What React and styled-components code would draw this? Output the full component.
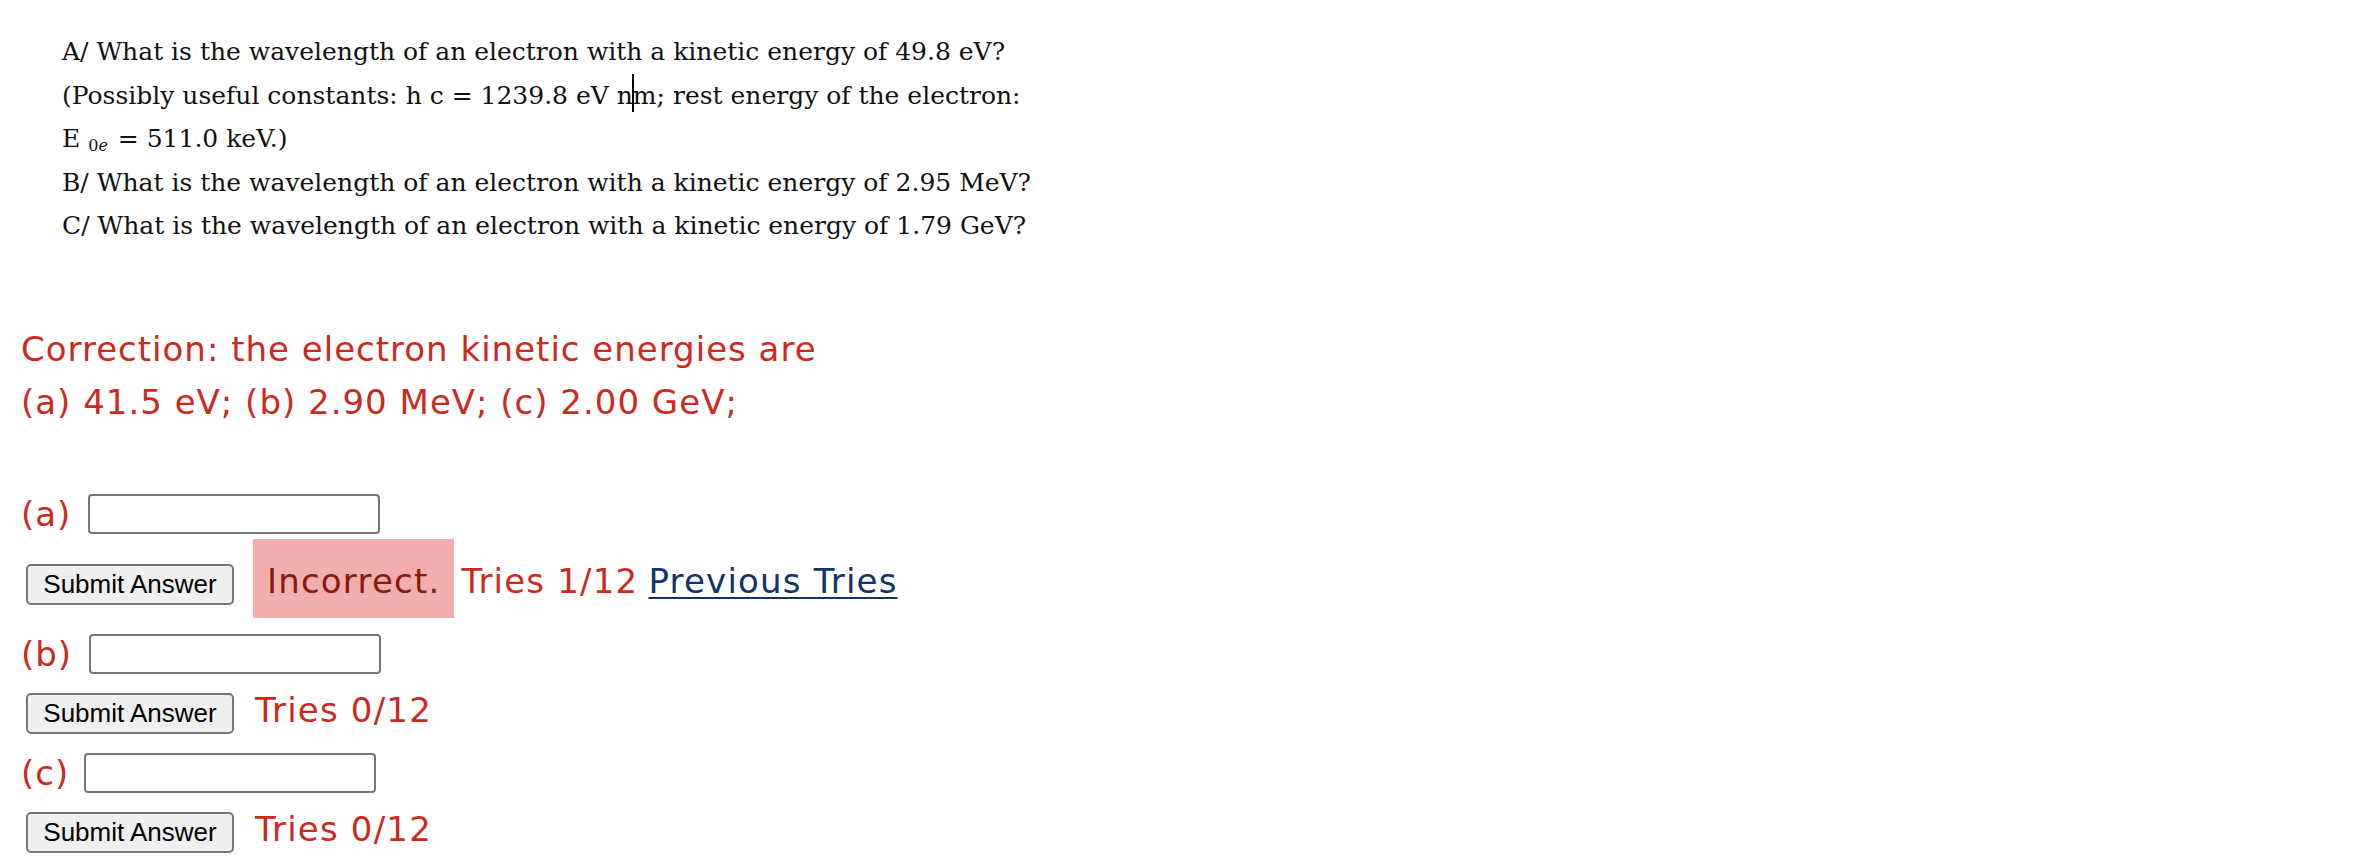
import styled, { createGlobalStyle } from 'styled-components';

const GlobalStyle = createGlobalStyle`
  body {
    margin: 0;
    background: #ffffff;
  }
`;

const Page = styled.div`
  padding: 30px 0 0 21px;
  display: flex;
  flex-direction: column;
  align-items: flex-start;
`;

const Question = styled.div`
  margin-left: 41px;
  font-family: "DejaVu Serif", "Liberation Serif", serif;
  font-size: 25px;
  line-height: 43.5px;
  color: #111;
`;

const Sub = styled.sub`
  font-size: 16px;
  vertical-align: -4px;
  line-height: 0;
  margin-right: 2px;
`;

const CursorAnchor = styled.span`
  position: relative;
  display: inline-block;
  width: 0;
`;

const Cursor = styled.span`
  position: absolute;
  left: -1px;
  top: -30px;
  width: 2px;
  height: 38px;
  background: #000;
`;

const Correction = styled.div`
  margin-top: 75px;
  font-family: "DejaVu Sans", Verdana, sans-serif;
  font-size: 34px;
  letter-spacing: 1px;
  line-height: 53px;
  color: #cc2a1e;
`;

const AnswerRow = styled.div`
  display: flex;
  align-items: center;
  margin-top: ${p => p.$top}px;
  height: 40px;
`;

const Label = styled.span`
  font-family: "DejaVu Sans", Verdana, sans-serif;
  font-size: 34px;
  letter-spacing: 1px;
  color: #cc2a1e;
  line-height: 40px;
`;

const AnswerInput = styled.input`
  box-sizing: border-box;
  width: 292px;
  height: 40px;
  margin-left: ${p => p.$gap}px;
  border: 2px solid #767676;
  border-radius: 4px;
  background: #fff;
  padding: 0 6px;
  font-size: 24px;
`;

const SubmitRow = styled.div`
  display: flex;
  align-items: baseline;
  margin-top: ${p => p.$top}px;
  font-family: "DejaVu Sans", Verdana, sans-serif;
  font-size: 34px;
  letter-spacing: 1.2px;
  line-height: normal;
`;

const SubmitButton = styled.button`
  box-sizing: border-box;
  width: 208px;
  height: 41px;
  margin-left: 5px;
  padding: 0;
  font-family: "Liberation Sans", Arial, sans-serif;
  font-size: 26px;
  letter-spacing: 0;
  color: #000;
  background: #efefef;
  border: 2px solid #767676;
  border-radius: 5px;
`;

const Incorrect = styled.span`
  display: inline-block;
  margin-left: 19px;
  padding: 22px 14px 17px 14px;
  background: #f2adad;
  color: #861a10;
`;

const Tries = styled.span`
  margin-left: ${p => p.$gap}px;
  color: #cc2a1e;
`;

const PrevLink = styled.a`
  margin-left: 10px;
  color: #13336b;
  text-decoration: underline;
  text-underline-offset: 4px;
  text-decoration-thickness: 2px;
`;

export default function App() {
  return (
    <Page>
      <GlobalStyle />
      <Question>
        <div>A/ What is the wavelength of an electron with a kinetic energy of 49.8 eV?</div>
        <div>
          (Possibly useful constants: h c = 1239.8 eV n
          <CursorAnchor><Cursor /></CursorAnchor>
          m; rest energy of the electron:
        </div>
        <div>E <Sub>0<i>e</i></Sub> = 511.0 keV.)</div>
        <div>B/ What is the wavelength of an electron with a kinetic energy of 2.95 MeV?</div>
        <div>C/ What is the wavelength of an electron with a kinetic energy of 1.79 GeV?</div>
      </Question>
      <Correction>
        <div>Correction: the electron kinetic energies are</div>
        <div>(a) 41.5 eV; (b) 2.90 MeV; (c) 2.00 GeV;</div>
      </Correction>

      <AnswerRow $top={65}>
        <Label>(a)</Label>
        <AnswerInput $gap={17} />
      </AnswerRow>
      <SubmitRow $top={5}>
        <SubmitButton>Submit Answer</SubmitButton>
        <Incorrect>Incorrect.</Incorrect>
        <Tries $gap={7}>Tries 1/12</Tries>
        <PrevLink href="#">Previous Tries</PrevLink>
      </SubmitRow>

      <AnswerRow $top={16}>
        <Label>(b)</Label>
        <AnswerInput $gap={17} />
      </AnswerRow>
      <SubmitRow $top={16}>
        <SubmitButton>Submit Answer</SubmitButton>
        <Tries $gap={21}>Tries 0/12</Tries>
      </SubmitRow>

      <AnswerRow $top={19}>
        <Label>(c)</Label>
        <AnswerInput $gap={15} />
      </AnswerRow>
      <SubmitRow $top={16}>
        <SubmitButton>Submit Answer</SubmitButton>
        <Tries $gap={21}>Tries 0/12</Tries>
      </SubmitRow>
    </Page>
  );
}
